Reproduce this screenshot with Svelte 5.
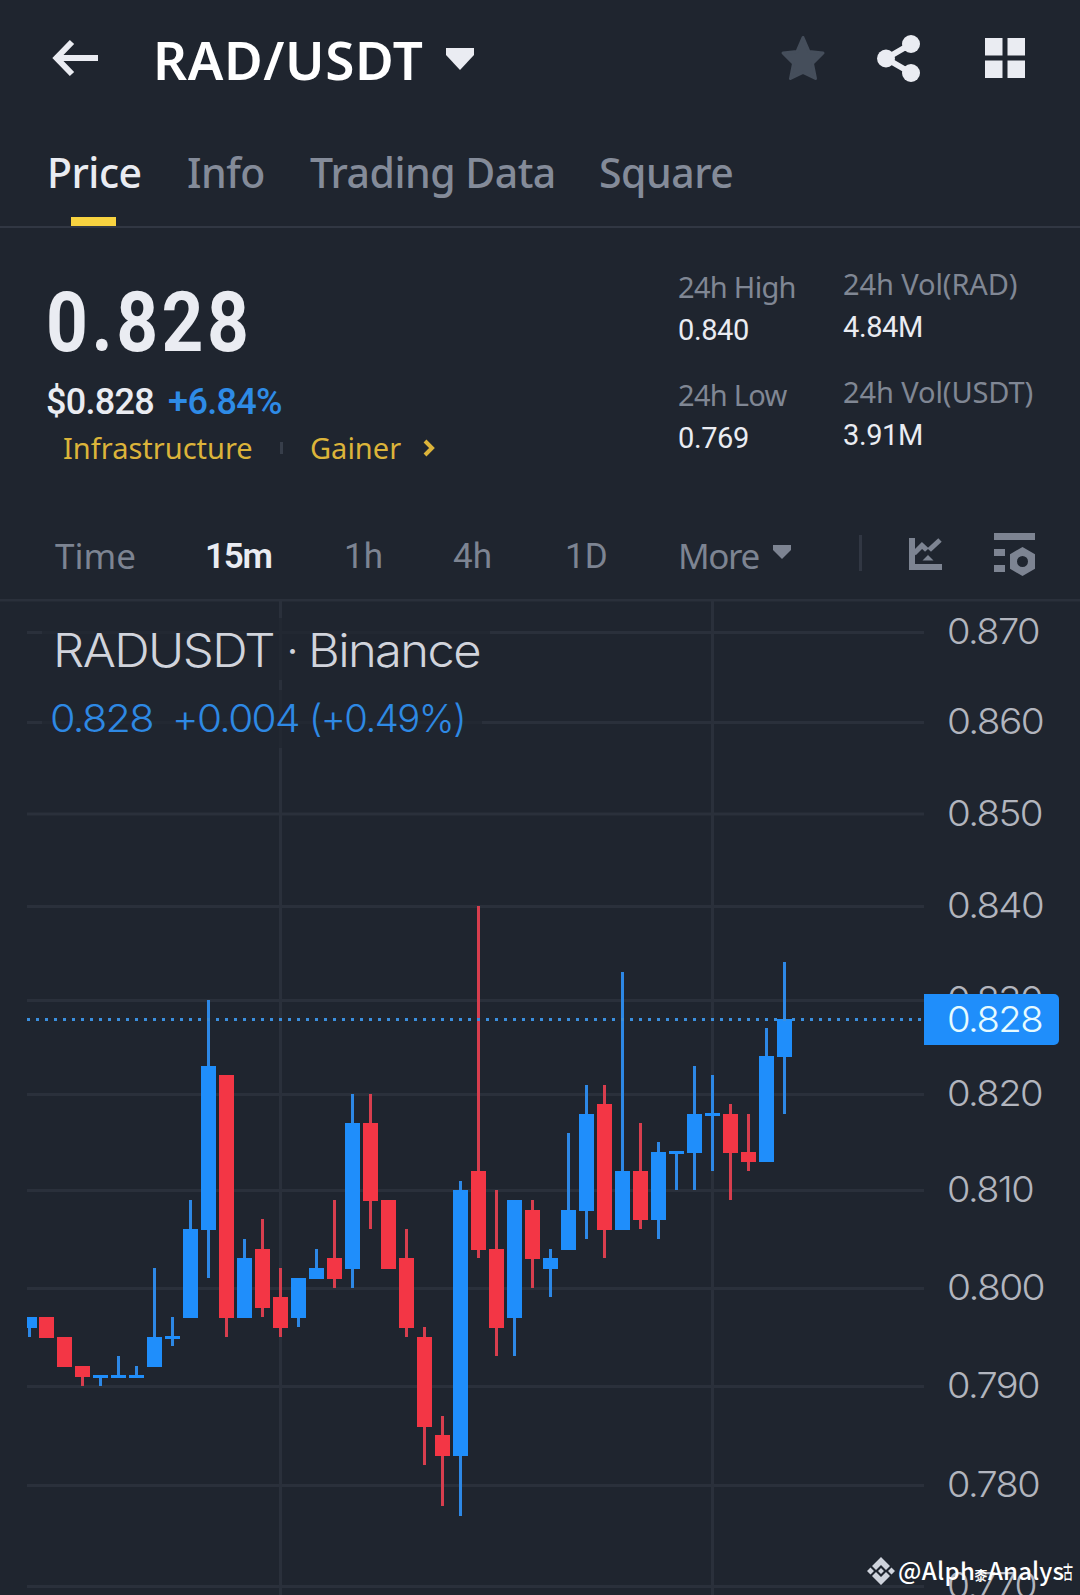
<script>
    const tabs = [
        { label: "Price", width: 94 },
        { label: "Info", width: 77 },
        { label: "Trading Data", width: 243 },
        { label: "Square", width: 134 },
    ];
    let activeTab = "Price";

    const stats = [
        [
            { label: "24h High", value: "0.840" },
            { label: "24h Low", value: "0.769" },
        ],
        [
            { label: "24h Vol(RAD)", value: "4.84M" },
            { label: "24h Vol(USDT)", value: "3.91M" },
        ],
    ];

    const intervals = [
        { label: "Time", width: 150 },
        { label: "15m", width: 139 },
        { label: "1h", width: 109 },
        { label: "4h", width: 112 },
        { label: "1D", width: 113 },
    ];
    let activeInterval = "15m";

    // the chart svg starts right under the interval bar
    const top = 599;
    const axis = [
        { label: "0.870", y: 632.5, width: 92 },
        { label: "0.860", y: 722.5, width: 96 },
        { label: "0.850", y: 814, width: 95 },
        { label: "0.840", y: 906.5, width: 96 },
        { label: "0.830", y: 1000.5, width: 95 },
        { label: "0.820", y: 1094.5, width: 95 },
        { label: "0.810", y: 1190.5, width: 86 },
        { label: "0.800", y: 1288.5, width: 97 },
        { label: "0.790", y: 1386.5, width: 92 },
        { label: "0.780", y: 1485.5, width: 92 },
        { label: "0.770", y: 1586.5, width: 89 },
    ];

    // direction, wick top, body top, body bottom, wick bottom
    const candles = [
        ["up", 1317, 1317, 1328, 1337],
        ["down", 1317, 1317, 1338, 1338],
        ["down", 1337, 1337, 1367, 1367],
        ["down", 1366, 1366, 1377, 1386],
        ["up", 1375, 1375, 1378, 1386],
        ["up", 1356, 1375, 1378, 1378],
        ["up", 1366, 1375, 1378, 1378],
        ["up", 1268, 1337, 1367, 1367],
        ["up", 1317, 1336, 1339, 1346],
        ["up", 1200, 1229, 1318, 1318],
        ["up", 1000, 1066, 1230, 1278],
        ["down", 1075, 1075, 1318, 1337],
        ["up", 1239, 1258, 1318, 1318],
        ["down", 1219, 1249, 1308, 1317],
        ["down", 1268, 1297, 1328, 1337],
        ["up", 1278, 1278, 1318, 1327],
        ["up", 1249, 1268, 1279, 1279],
        ["down", 1200, 1258, 1279, 1288],
        ["up", 1094, 1123, 1269, 1288],
        ["down", 1094, 1123, 1201, 1229],
        ["down", 1200, 1200, 1269, 1269],
        ["down", 1229, 1258, 1328, 1337],
        ["down", 1327, 1337, 1427, 1465],
        ["down", 1416, 1435, 1456, 1506],
        ["up", 1181, 1190, 1456, 1516],
        ["down", 906, 1171, 1250, 1258],
        ["down", 1190, 1249, 1328, 1356],
        ["up", 1200, 1200, 1318, 1356],
        ["down", 1200, 1210, 1259, 1288],
        ["up", 1249, 1258, 1269, 1297],
        ["up", 1133, 1210, 1250, 1250],
        ["up", 1085, 1114, 1211, 1239],
        ["down", 1085, 1104, 1230, 1258],
        ["up", 972, 1171, 1230, 1230],
        ["down", 1123, 1171, 1220, 1229],
        ["up", 1142, 1152, 1220, 1239],
        ["up", 1151, 1151, 1154, 1190],
        ["up", 1066, 1114, 1153, 1190],
        ["up", 1075, 1113, 1116, 1171],
        ["down", 1104, 1114, 1153, 1200],
        ["down", 1114, 1152, 1162, 1171],
        ["up", 1028, 1056, 1162, 1162],
        ["up", 962, 1019, 1057, 1114],
    ].map(([dir, high, bodyTop, bodyBottom, low], i) => {
        const x = 21 + i * 18;
        // the first candle is cut off by the pane edge
        return i === 0
            ? { dir, high, bodyTop, bodyBottom, low, x: 27, width: 10, wick: 28 }
            : { dir, high, bodyTop, bodyBottom, low, x, width: 15, wick: x + 6 };
    });
</script>

<main class="screen">
    <header class="topbar">
        <svg class="back" width="46" height="38" viewBox="0 0 46 38" aria-label="Back">
            <path d="M20 3 4.5 19 20 35M4 19h42" />
        </svg>
        <h1>RAD/USDT</h1>
        <svg class="caret" width="28" height="22" viewBox="0 0 28 22">
            <path d="M0 0h28v7L14 22 0 7z" />
        </svg>
        <svg class="star" width="46" height="46" viewBox="0 0 46 46">
            <path
                d="M23 2.5 29 16.5 43 18 32.500 28.500 35.500 43.500 23 37.300 10.500 43.500 13.500 28.500 3 18 17 16.500z"
            />
        </svg>
        <svg class="share" width="43" height="47" viewBox="0 0 43 47">
            <path d="M9 23.500 34 9M9 23.500 34 38" />
            <circle cx="9" cy="23.500" r="9" />
            <circle cx="34" cy="9" r="9" />
            <circle cx="34" cy="38" r="9" />
        </svg>
        <svg class="tiles" width="40" height="40" viewBox="0 0 40 40">
            <path d="M0 0h17.500v17.500H0zM22.500 0H40v17.500H22.500zM0 22.500h17.500V40H0zM22.500 22.500H40V40H22.500z" />
        </svg>
    </header>

    <nav class="tabs">
        {#each tabs as tab}
            <button class:active={tab.label === activeTab} style={`width: ${tab.width}px`}>
                {tab.label}
            </button>
        {/each}
    </nav>

    <section class="summary">
        <div class="quote">
            <div class="last">0.828</div>
            <div class="fiat">
                <span>$0.828</span>
                <span class="change">+6.84%</span>
            </div>
            <div class="tags">
                <span class="infra">Infrastructure</span>
                <i></i>
                <span class="gainer">Gainer</span>
                <svg width="12" height="18" viewBox="0 0 12 18">
                    <path d="M2 2l7 7-7 7" />
                </svg>
            </div>
        </div>
        {#each stats as column, i}
            <dl class={i === 0 ? "prices" : "volumes"}>
                {#each column as stat}
                    <div>
                        <dt>{stat.label}</dt>
                        <dd>{stat.value}</dd>
                    </div>
                {/each}
            </dl>
        {/each}
    </section>

    <nav class="intervals">
        {#each intervals as interval}
            <button
                class:active={interval.label === activeInterval}
                class:word={interval.label === "Time"}
                style={`width: ${interval.width}px`}
            >
                {interval.label}
            </button>
        {/each}
        <button class="more">More</button>
        <svg class="more-caret" width="18" height="14" viewBox="0 0 18 14">
            <path d="M0 0h18v5L9 14 0 5z" />
        </svg>
        <i></i>
        <svg class="indicators" width="33" height="33" viewBox="0 0 33 33">
            <path d="M0 0h6v26h27v6H0z" />
            <path class="line" d="M5 15.500 13 7.500 19 13 31 2" />
            <path d="M13 16.500h12L19 11zM13.500 22h11L19 16.500z" class="gap" />
            <path d="M19 17l5.500 5.500h-11z" />
        </svg>
        <svg class="settings" width="41" height="43" viewBox="0 0 41 43">
            <path d="M0 0h41v7H0zM0 16h11v7H0zM0 32h11v7H0z" />
            <path
                fill-rule="evenodd"
                d="M28.500 14 41 21.200v14.600L28.500 43 16 35.800V21.200zM28.500 23a5.500 5.500 0 1 0 0 11 5.500 5.500 0 0 0 0-11z"
            />
        </svg>
    </nav>

    <svg class="chart" width="1080" height="996" viewBox={`0 ${top} 1080 996`}>
        <g class="grid">
            <path d="M0 600H1080" />
            <path d="M280.500 600V1595M712.500 600V1595" />
            {#each axis as tick}
                <path d={`M27 ${tick.y}H924`} />
            {/each}
        </g>

        {#each candles as c}
            <g class={c.dir}>
                <rect class="wick" x={c.wick} y={c.high} width="3" height={c.low - c.high} />
                <rect x={c.x} y={c.bodyTop} width={c.width} height={c.bodyBottom - c.bodyTop} />
            </g>
        {/each}

        <path class="last-line" d="M27 1019.500H924" />

        <rect class="legend-bg" x="42" y="618" width="448" height="62" />
        <rect class="legend-bg" x="42" y="690" width="440" height="58" />
        <g class="symbol">
            <text x="53" y="666.500" textLength="221" lengthAdjust="spacingAndGlyphs">RADUSDT</text>
            <text x="286" y="666.500">·</text>
            <text x="308" y="666.500" textLength="172" lengthAdjust="spacingAndGlyphs">Binance</text>
        </g>
        <g class="legend">
            <text x="50" y="731.500" textLength="103" lengthAdjust="spacingAndGlyphs">0.828</text>
            <text x="172" y="731.500" textLength="127" lengthAdjust="spacingAndGlyphs">+0.004</text>
            <text x="309" y="731.500" textLength="156" lengthAdjust="spacingAndGlyphs">(+0.49%)</text>
        </g>

        <g class="axis">
            {#each axis as tick}
                <text x="947" y={tick.y + 11.5} textLength={tick.width} lengthAdjust="spacingAndGlyphs">
                    {tick.label}
                </text>
            {/each}
        </g>

        <path class="badge" d="M924 994H1054a5 5 0 0 1 5 5V1040a5 5 0 0 1-5 5H924z" />
        <text class="badge-text" x="947" y="1032" textLength="95" lengthAdjust="spacingAndGlyphs">0.828</text>

        <g class="logo">
            <path
                d="M881 1557l9 9-4 4-5-5-5 5-4-4zM881 1585l-9-9 4-4 5 5 5-5 4 4zM881 1568l3 3-3 3-3-3zM870.500 1567.500l3.500 3.500-3.500 3.500-3.500-3.500zM891.500 1567.500l3.500 3.500-3.500 3.500-3.500-3.500z"
            />
        </g>
        <g class="watermark">
            <text x="898" y="1580" textLength="77">@Alph</text>
            <text class="small" x="974.500" y="1580">桼</text>
            <text x="988" y="1580" textLength="76">Analys</text>
            <text class="tall" x="1063" y="1579" textLength="10" lengthAdjust="spacingAndGlyphs">古</text>
        </g>
    </svg>
</main>

<style>
    :global(body) {
        background: #1f252f;
    }

    .screen {
        width: 1080px;
        height: 1595px;
        overflow: hidden;
        background: #1f252f;
        color: #eaecf2;
        font-family: "Noto Sans", sans-serif;
    }

    button {
        padding: 0;
        border: 0;
        background: none;
        color: inherit;
        font: inherit;
        letter-spacing: inherit;
        text-align: left;
        white-space: nowrap;
    }

    .topbar {
        display: flex;
        align-items: center;
        height: 116px;
        padding-left: 52px;
        fill: #eaecf2;
    }

    .back {
        fill: none;
        stroke: #eaecf2;
        stroke-width: 6;
    }

    h1 {
        width: 289px;
        margin: 3px 0 0 55px;
        color: #ffffff;
        font-size: 53px;
        font-weight: 600;
        line-height: 72px;
        letter-spacing: 0.6px;
    }

    .caret {
        margin: 2px 0 0 4px;
    }

    .star {
        margin-left: 306px;
        fill: #454e5b;
        stroke: #454e5b;
        stroke-width: 3;
        stroke-linejoin: round;
    }

    .share {
        margin-left: 51px;
    }

    .share path {
        stroke: #eaecf2;
        stroke-width: 6;
    }

    .tiles {
        margin-left: 65px;
    }

    .tabs {
        display: flex;
        gap: 46px;
        height: 110px;
        padding-left: 47px;
        border-bottom: 2px solid #313743;
        color: #848b99;
        font-size: 41px;
        font-weight: 500;
        letter-spacing: -0.5px;
    }

    .tabs button {
        display: flex;
        flex-direction: column;
        line-height: 56px;
        padding-top: 28px;
    }

    .tabs .active {
        color: #eaecf2;
    }

    .tabs .active::after {
        content: "";
        width: 45px;
        height: 9px;
        margin: 17px 0 0 24px;
        background: #f8d340;
    }

    .summary {
        display: flex;
        height: 282px;
    }

    .quote {
        flex: none;
        box-sizing: border-box;
        width: 678px;
        padding: 55px 0 0 46px;
        font-family: Roboto, sans-serif;
    }

    .last {
        font-size: 83px;
        font-weight: 700;
        line-height: 80px;
        letter-spacing: 4px;
        transform: scaleX(0.88);
        transform-origin: left;
    }

    .fiat {
        display: flex;
        gap: 14px;
        margin-top: 17px;
        font-size: 36px;
        font-weight: 500;
        line-height: 44px;
        letter-spacing: -0.7px;
    }

    .change {
        color: #2e8be6;
    }

    .tags {
        display: flex;
        align-items: center;
        margin: 4px 0 0 17px;
        color: #dcb43a;
        font-family: "Noto Sans", sans-serif;
        font-size: 29px;
        line-height: 40px;
    }

    .infra {
        width: 217px;
    }

    .tags i {
        width: 3px;
        height: 12px;
        background: #373e4a;
    }

    .gainer {
        width: 113px;
        margin-left: 27px;
    }

    .tags svg {
        fill: none;
        stroke: #dcb43a;
        stroke-width: 4;
    }

    dl {
        margin: 0;
        font-size: 29px;
        line-height: 42px;
        white-space: nowrap;
    }

    dl div {
        height: 108px;
    }

    dt {
        color: #808794;
        letter-spacing: -0.1px;
    }

    dd {
        margin: 1px 0 0;
        font-family: Roboto, sans-serif;
        letter-spacing: -0.4px;
    }

    .prices {
        width: 165px;
        padding-top: 38px;
    }

    .prices dt {
        letter-spacing: -0.7px;
    }

    .volumes {
        padding-top: 35px;
    }

    .intervals {
        display: flex;
        align-items: center;
        height: 89px;
        padding-left: 55px;
        color: #7d8492;
        fill: #7d8492;
        font-family: Roboto, sans-serif;
        font-size: 35px;
        line-height: 44px;
    }

    .intervals button {
        padding-top: 5px;
    }

    .intervals .word,
    .intervals .more {
        padding-top: 2px;
        font-family: "Noto Sans", sans-serif;
    }

    .intervals .active {
        padding-top: 4px;
        color: #eaecf2;
        font-weight: 600;
        letter-spacing: -1.2px;
    }

    .intervals .more {
        width: 95px;
        letter-spacing: -1.4px;
    }

    .more-caret {
        margin-bottom: 5px;
    }

    .intervals i {
        width: 3px;
        height: 36px;
        margin: 0 47px 4px 68px;
        background: #313743;
    }

    .indicators .line {
        fill: none;
        stroke: #7d8492;
        stroke-width: 5;
    }

    .indicators .gap {
        fill: #1f252f;
    }

    .settings {
        margin-left: 52px;
    }

    .chart {
        display: block;
        font-family: Inter, sans-serif;
        font-weight: 300;
        letter-spacing: -1.5px;
    }

    .grid {
        stroke: #2a303b;
        stroke-width: 3;
    }

    .up {
        fill: #1f8efb;
    }

    .up .wick {
        fill: #2d88e6;
    }

    .down {
        fill: #f33645;
    }

    .down .wick {
        fill: #d73e4e;
    }

    .last-line {
        stroke: #3a8fdf;
        stroke-width: 3;
        stroke-dasharray: 3 6;
    }

    .legend-bg {
        fill: #1f252f;
        opacity: 0.7;
    }

    .symbol {
        fill: #d1d4dc;
        font-size: 46px;
    }

    .legend {
        fill: #2e89e4;
        font-size: 38px;
    }

    .axis {
        fill: #b2b5be;
        font-size: 36px;
    }

    .badge {
        fill: #1f8efb;
    }

    .badge-text {
        fill: #e6fbff;
        font-size: 36px;
    }

    .logo {
        fill: #cfd3dc;
    }

    .watermark {
        fill: #ffffff;
        font-family: "Noto Sans CJK SC", sans-serif;
        font-size: 24px;
        font-weight: 500;
        letter-spacing: 0;
    }

    .watermark .small {
        font-size: 13px;
        font-weight: 700;
    }

    .watermark .tall {
        font-size: 18px;
    }
</style>
